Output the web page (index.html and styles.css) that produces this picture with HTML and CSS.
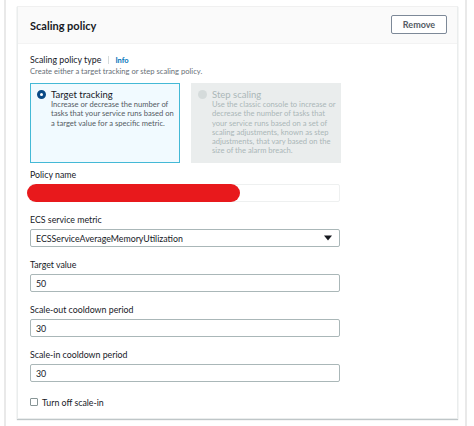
FILE: index.html
```html
<!DOCTYPE html>
<html>
<head>
<meta charset="utf-8">
<link rel="stylesheet" href="styles.css">
</head>
<body>
<div class="frame">
  <div class="card">
    <div class="card-header">
      <h2 class="title">Scaling policy</h2>
      <button class="btn">Remove</button>
    </div>
    <div class="card-body">
      <div class="label-row">
        <span class="label">Scaling policy type</span>
        <span class="sep"></span>
        <span class="info">Info</span>
      </div>
      <div class="hint">Create either a target tracking or step scaling policy.</div>
      <div class="tiles">
        <div class="tile selected">
          <span class="radio on"></span>
          <div class="tile-text">
            <div class="tile-title">Target tracking</div>
            <div class="tile-desc">Increase or decrease the number of tasks that your service runs based on a target value for a specific metric.</div>
          </div>
        </div>
        <div class="tile disabled">
          <span class="radio off"></span>
          <div class="tile-text">
            <div class="tile-title">Step scaling</div>
            <div class="tile-desc">Use the classic console to increase or decrease the number of tasks that your service runs based on a set of scaling adjustments, known as step adjustments, that vary based on the size of the alarm breach.</div>
          </div>
        </div>
      </div>

      <div class="field first">
        <div class="label">Policy name</div>
        <div class="input faint"><span class="redact"></span></div>
      </div>
      <div class="field">
        <div class="label">ECS service metric</div>
        <div class="input select">
          <span>ECSServiceAverageMemoryUtilization</span>
          <svg class="caret" width="8" height="6" viewBox="0 0 8 6"><path d="M0 0.5 L8 0.5 L4 5.5 Z" fill="#16191f"/></svg>
        </div>
      </div>
      <div class="field">
        <div class="label">Target value</div>
        <div class="input"><span>50</span></div>
      </div>
      <div class="field">
        <div class="label">Scale-out cooldown period</div>
        <div class="input"><span>30</span></div>
      </div>
      <div class="field">
        <div class="label">Scale-in cooldown period</div>
        <div class="input"><span>30</span></div>
      </div>
      <div class="check-row">
        <span class="checkbox"></span>
        <span class="check-label">Turn off scale-in</span>
      </div>
    </div>
  </div>
</div>
</body>
</html>
```

FILE: styles.css
```css
html, body {
  margin: 0;
  padding: 0;
  background: #ffffff;
}
body {
  font-family: "Lato", "Open Sans", sans-serif;
  color: #16191f;
  width: 474px;
  height: 426px;
  overflow: hidden;
}
.frame {
  margin-left: 4px;
  width: 463px;
  height: 426px;
  border-left: 2px solid #e9e9e9;
  border-right: 2px solid #e9e9e9;
  padding-top: 6px;
  box-sizing: border-box;
}
.card {
  margin-left: 11px;
  width: 441px;
  height: 413px;
  box-sizing: border-box;
  border: 1px solid #eaeded;
  border-top-color: #f0f0f0;
  box-shadow: 0 1px 1px rgba(0, 28, 36, 0.25);
  background: #fff;
}
.card-header {
  height: 36px;
  background: #fafafa;
  display: flex;
  align-items: center;
  justify-content: space-between;
  padding: 0 10px 0 12px;
  border-bottom: 1px solid #f3f3f3;
}
.title {
  margin: 0;
  font-size: 11px;
  font-weight: 700;
  color: #16191f;
  padding-top: 1px;
}
.btn {
  width: 56px;
  height: 19px;
  margin-top: -1px;
  border: 1px solid #7d8998;
  border-radius: 2px;
  background: #fff;
  color: #545b64;
  font-family: inherit;
  font-size: 9px;
  font-weight: 700;
  padding: 0;
}
.card-body {
  padding: 10px 12px 0 12px;
}
.label-row {
  display: flex;
  align-items: center;
  height: 12px;
}
.label {
  font-size: 8.8px;
  line-height: 12px;
  color: #16191f;
}
.sep {
  width: 1px;
  height: 8px;
  background: #d5dbdb;
  margin: 0 6px 0 7px;
}
.info {
  font-size: 7.5px;
  font-weight: 700;
  color: #0073bb;
}
.hint {
  font-size: 7.6px;
  line-height: 10px;
  color: #687078;
}
.tiles {
  display: flex;
  gap: 11px;
  margin-top: 7px;
}
.tile {
  width: 150px;
  height: 80px;
  box-sizing: border-box;
  display: flex;
  padding: 5px 4px 0 6px;
}
.tile.selected {
  background: #f1faff;
  border: 1px solid #44b9d6;
}
.tile.disabled {
  background: #eaeded;
  border: 1px solid #eaeded;
}
.radio {
  width: 9px;
  height: 9px;
  border-radius: 50%;
  box-sizing: border-box;
  flex: none;
  margin-top: 1px;
}
.radio.on {
  border: 3px solid #0a4a86;
  background: #fff;
}
.radio.off {
  background: #d5dbdb;
}
.tile-text {
  margin-left: 5px;
}
.tile-title {
  font-size: 9.5px;
  line-height: 11px;
}
.tile-desc {
  font-size: 7.6px;
  line-height: 9.3px;
  color: #545b64;
}
.tile.disabled .tile-title,
.tile.disabled .tile-desc {
  color: #aab7b8;
}
.field {
  margin-top: 12px;
  width: 310px;
}
.field.first {
  margin-top: 6px;
}
.field .label {
  margin-bottom: 3px;
}
.input {
  position: relative;
  height: 18px;
  box-sizing: border-box;
  border: 1px solid #aab7b8;
  border-radius: 2px;
  display: flex;
  align-items: center;
  padding: 0 5px;
  font-size: 8.8px;
  color: #16191f;
  background: #fff;
}
.input.faint {
  border-color: #eef0f0;
}
.select {
  justify-content: space-between;
}
.caret {
  margin-right: 2px;
}
.redact {
  position: absolute;
  left: -4px;
  top: -1px;
  width: 213px;
  height: 18px;
  border-radius: 9px;
  background: #e8191c;
}
.check-row {
  display: flex;
  align-items: center;
  margin-top: 14px;
  height: 12px;
}
.checkbox {
  width: 8px;
  height: 8px;
  box-sizing: border-box;
  border: 1px solid #879596;
  border-radius: 1px;
  background: #fff;
}
.check-label {
  font-size: 8.8px;
  margin-left: 4px;
  color: #16191f;
}
```
